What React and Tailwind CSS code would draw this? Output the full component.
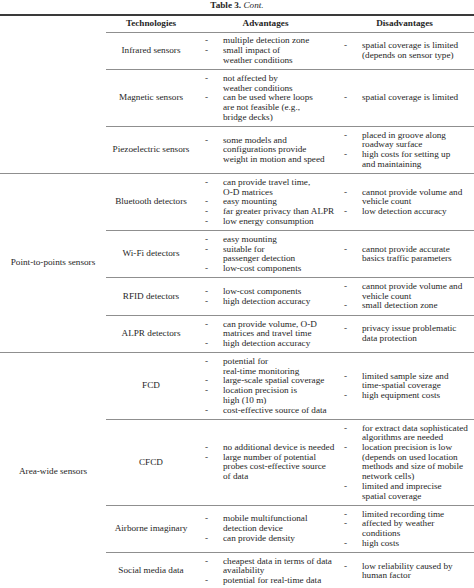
const serif = { fontFamily: '"Liberation Serif", "DejaVu Serif", serif' };

const sections = [
  {
    label: '',
    rows: [
      {
        tech: 'Infrared sensors',
        adv: [['multiple detection zone'], ['small impact of', 'weather conditions']],
        dis: [['spatial coverage is limited', '(depends on sensor type)']],
      },
      {
        tech: 'Magnetic sensors',
        adv: [['not affected by', 'weather conditions'], ['can be used where loops', 'are not feasible (e.g.,', 'bridge decks)']],
        dis: [['spatial coverage is limited']],
      },
      {
        tech: 'Piezoelectric sensors',
        adv: [['some models and', 'configurations provide', 'weight in motion and speed']],
        dis: [['placed in groove along', 'roadway surface'], ['high costs for setting up', 'and maintaining']],
      },
    ],
  },
  {
    label: 'Point-to-points sensors',
    rows: [
      {
        tech: 'Bluetooth detectors',
        adv: [['can provide travel time,', 'O-D matrices'], ['easy mounting'], ['far greater privacy than ALPR'], ['low energy consumption']],
        dis: [['cannot provide volume and', 'vehicle count'], ['low detection accuracy']],
      },
      {
        tech: 'Wi-Fi detectors',
        adv: [['easy mounting'], ['suitable for', 'passenger detection'], ['low-cost components']],
        dis: [['cannot provide accurate', 'basics traffic parameters']],
      },
      {
        tech: 'RFID detectors',
        adv: [['low-cost components'], ['high detection accuracy']],
        dis: [['cannot provide volume and', 'vehicle count'], ['small detection zone']],
      },
      {
        tech: 'ALPR detectors',
        adv: [['can provide volume, O-D', 'matrices and travel time'], ['high detection accuracy']],
        dis: [['privacy issue problematic', 'data protection']],
      },
    ],
  },
  {
    label: 'Area-wide sensors',
    rows: [
      {
        tech: 'FCD',
        adv: [['potential for', 'real-time monitoring'], ['large-scale spatial coverage'], ['location precision is', 'high (10 m)'], ['cost-effective source of data']],
        dis: [['limited sample size and', 'time-spatial coverage'], ['high equipment costs']],
      },
      {
        tech: 'CFCD',
        adv: [['no additional device is needed'], ['large number of potential', 'probes cost-effective source', 'of data']],
        dis: [
          ['for extract data sophisticated', 'algorithms are needed'],
          ['location precision is low', '(depends on used location', 'methods and size of mobile', 'network cells)'],
          ['limited and imprecise', 'spatial coverage'],
        ],
      },
      {
        tech: 'Airborne imaginary',
        adv: [['mobile multifunctional', 'detection device'], ['can provide density']],
        dis: [['limited recording time'], ['affected by weather', 'conditions'], ['high costs']],
      },
      {
        tech: 'Social media data',
        adv: [['cheapest data in terms of data', 'availability'], ['potential for real-time data']],
        dis: [['low reliability caused by', 'human factor']],
      },
    ],
  },
];

function Items({ items }) {
  return (
    <div className="flex flex-col pl-[9px]">
      {items.map((lines, i) => (
        <div key={i} className="flex">
          <span className="w-[18px] shrink-0">-</span>
          <div>
            {lines.map((line, j) => (
              <div key={j} className="whitespace-nowrap">{line}</div>
            ))}
          </div>
        </div>
      ))}
    </div>
  );
}

export default function App() {
  return (
    <div className="w-[474px] h-[588px] overflow-hidden bg-white text-[#262626] text-[9.2px] leading-[9.7px]" style={serif}>
      {/* Caption */}
      <div className="h-[14px] pt-[1px] text-center">
        <span className="font-bold">Table 3.</span> <span className="italic">Cont.</span>
      </div>

      <table className="w-full table-fixed border-collapse border-t-2 border-[#3a3a3a]">
        <colgroup>
          <col className="w-[106px]" />
          <col className="w-[90px]" />
          <col className="w-[139px]" />
          <col className="w-[139px]" />
        </colgroup>
        <thead>
          <tr>
            <th className="py-[3px]" />
            <th className="py-[3px] font-bold text-center border-b border-[#8f8f8f]">Technologies</th>
            <th className="py-[3px] font-bold text-center border-b border-[#8f8f8f]">Advantages</th>
            <th className="py-[3px] font-bold text-center border-b border-[#8f8f8f]">Disadvantages</th>
          </tr>
        </thead>
        <tbody>
          {sections.map(section =>
            section.rows.map((row, i) => (
              <tr key={row.tech}>
                {i === 0 && (
                  <td rowSpan={section.rows.length} className="text-center align-middle border-b border-[#8f8f8f]">
                    {section.label}
                  </td>
                )}
                <td className="py-[3.7px] text-center align-middle border-b border-[#8f8f8f]">{row.tech}</td>
                <td className="py-[3.7px] align-middle border-b border-[#8f8f8f]">
                  <Items items={row.adv} />
                </td>
                <td className="py-[3.7px] align-middle border-b border-[#8f8f8f]">
                  <Items items={row.dis} />
                </td>
              </tr>
            ))
          )}
        </tbody>
      </table>
    </div>
  );
}
